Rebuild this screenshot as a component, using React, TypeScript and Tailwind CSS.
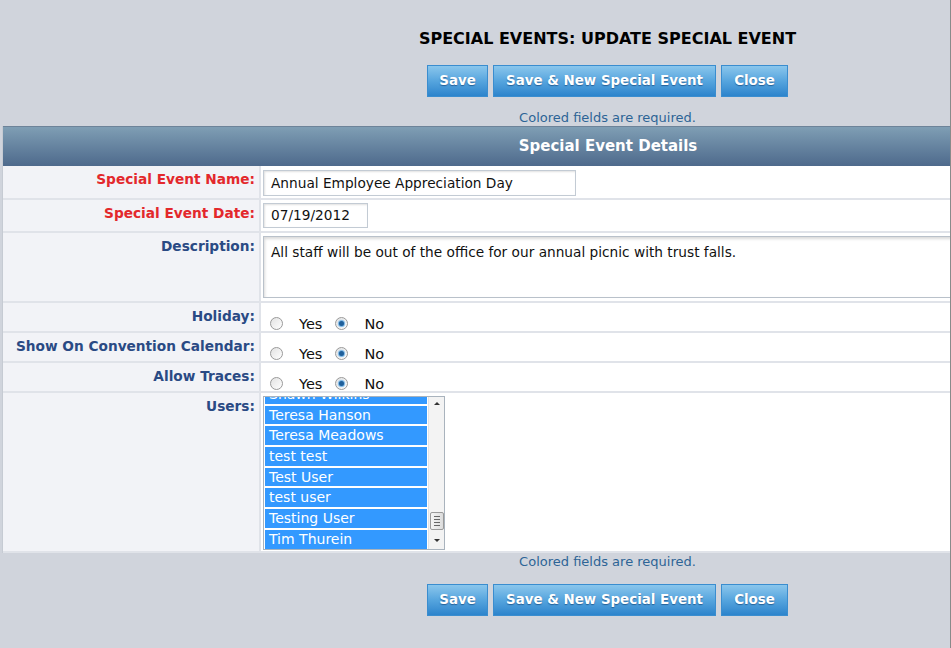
import React from 'react';

const font = { fontFamily: '"DejaVu Sans", Verdana, sans-serif' };

const users = [
  'Shawn Wilkins',
  'Teresa Hanson',
  'Teresa Meadows',
  'test test',
  'Test User',
  'test user',
  'Testing User',
  'Tim Thurein',
];

const ActionButtons: React.FC = () => (
  <div className="flex gap-[5px]">
    {['Save', 'Save & New Special Event', 'Close'].map((label) => (
      <button
        key={label}
        className={`h-[32px] border border-[#3a8dcf] bg-gradient-to-b from-[#8ac6ec] via-[#56a5de] to-[#2c84cc] text-[13.4px] font-bold text-white [text-shadow:0_1px_1px_rgba(0,40,90,0.5)] ${
          label === 'Save' ? 'w-[61px]' : label === 'Close' ? 'w-[67px]' : 'w-[223px]'
        }`}
      >
        {label}
      </button>
    ))}
  </div>
);

const Radio: React.FC<{ checked?: boolean }> = ({ checked }) => (
  <span className="flex h-[13px] w-[13px] items-center justify-center rounded-full border border-[#9a9a9a] bg-gradient-to-br from-[#e2e2e2] to-[#ffffff]">
    {checked && <span className="h-[5px] w-[5px] rounded-full bg-[#1f5f9a] shadow-[0_0_1px_1px_#6fb2e6]" />}
  </span>
);

const YesNo: React.FC = () => (
  <div className="flex items-center pl-[9px] pt-[8px] text-[14.5px] text-[#111]">
    <Radio />
    <span className="ml-[16px] mt-[3px]">Yes</span>
    <span className="ml-[13px]">
      <Radio checked />
    </span>
    <span className="ml-[16px] mt-[3px]">No</span>
  </div>
);

const Row: React.FC<{ label: string; required?: boolean; h: string; children: React.ReactNode }> = ({
  label,
  required,
  h,
  children,
}) => (
  <div className={`flex border-b-2 border-[#e0e3e9] ${h}`}>
    <div
      className={`w-[256px] shrink-0 bg-[#f2f3f7] pr-[4px] pt-[3px] text-right text-[13.7px] font-bold ${
        required ? 'text-[#e3282c]' : 'text-[#2a4a84]'
      }`}
    >
      {label}
    </div>
    <div className="flex-1 border-l-2 border-[#e0e3e9] bg-white">{children}</div>
  </div>
);

export default function App() {
  return (
    <div style={font} className="relative h-[648px] w-[951px] overflow-hidden border-r border-[#8a8a8a] bg-[#d0d4dc]">
      {/* top */}
      <div className="flex flex-col items-center pl-[265px]">
        <h1 className="mt-[27px] text-[16px] font-bold text-black">SPECIAL EVENTS: UPDATE SPECIAL EVENT</h1>
        <div className="mt-[14px]">
          <ActionButtons />
        </div>
        <p className="mt-[13px] h-[16px] text-[13px] leading-[16px] text-[#2d6496]">Colored fields are required.</p>
      </div>

      {/* details table */}
      <div className="ml-[2px] border-l border-[#c6cbd3]">
        <div className="flex h-[40px] items-center justify-center border-t border-[#6d8399] bg-gradient-to-b from-[#7f9eb4] to-[#4e6a8c] pl-[263px] text-[15px] font-bold text-white">
          Special Event Details
        </div>

        <Row label="Special Event Name:" required h="h-[34px]">
          <div className="pl-[2px] pt-[4px]">
            <div className="flex h-[26px] w-[313px] items-center border border-[#c3cbd4] pl-[7px] text-[13.7px] text-[#111] shadow-[inset_1px_1px_2px_rgba(0,0,0,0.12)]">
              Annual Employee Appreciation Day
            </div>
          </div>
        </Row>

        <Row label="Special Event Date:" required h="h-[33px]">
          <div className="pl-[2px] pt-[3px]">
            <div className="flex h-[25px] w-[105px] items-center border border-[#c3cbd4] pl-[7px] text-[13.7px] text-[#111] shadow-[inset_1px_1px_2px_rgba(0,0,0,0.12)]">
              07/19/2012
            </div>
          </div>
        </Row>

        <Row label="Description:" h="h-[70px]">
          <div className="pl-[2px] pt-[3px]">
            <div className="h-[62px] w-[800px] border border-[#b9c1ca] pl-[7px] pt-[5px] text-[13.7px] text-[#111] shadow-[inset_1px_2px_3px_rgba(0,0,0,0.15)]">
              All staff will be out of the office for our annual picnic with trust falls.
            </div>
          </div>
        </Row>

        <Row label="Holiday:" h="h-[30px]">
          <YesNo />
        </Row>
        <Row label="Show On Convention Calendar:" h="h-[30px]">
          <YesNo />
        </Row>
        <Row label="Allow Traces:" h="h-[30px]">
          <YesNo />
        </Row>

        <Row label="Users:" h="h-[160px]">
          <div className="pl-[2px] pt-[3px]">
            <div className="flex h-[154px] w-[182px] border border-[#a9b3bd] bg-white">
              <div className="relative w-[163px] overflow-hidden pl-[1px]">
                <div className="mt-[-12px]">
                  {users.map((u) => (
                    <div
                      key={u}
                      className="mb-[2px] flex h-[18.7px] items-center bg-[#3399ff] pl-[4px] text-[14px] text-white"
                    >
                      {u}
                    </div>
                  ))}
                </div>
              </div>
              <div className="relative ml-[1px] flex w-[16px] flex-col items-center border-l border-[#e3e3e3] bg-[#f3f3f3]">
                <span className="mt-[5px] h-0 w-0 border-x-[3px] border-b-[3px] border-x-transparent border-b-[#333]" />
                <div className="absolute top-[115px] flex h-[18px] w-[14px] flex-col items-center justify-center gap-[2px] rounded-[2px] border border-[#9a9a9a] bg-gradient-to-r from-[#f4f4f4] to-[#dcdcdc]">
                  <span className="h-px w-[6px] bg-[#666]" />
                  <span className="h-px w-[6px] bg-[#666]" />
                  <span className="h-px w-[6px] bg-[#666]" />
                  <span className="h-px w-[6px] bg-[#666]" />
                </div>
                <span className="absolute bottom-[7px] h-0 w-0 border-x-[3px] border-t-[3px] border-x-transparent border-t-[#333]" />
              </div>
            </div>
          </div>
        </Row>
      </div>

      {/* bottom */}
      <div className="flex flex-col items-center pl-[265px]">
        <p className="mt-[1px] h-[16px] text-[13px] leading-[16px] text-[#2d6496]">Colored fields are required.</p>
        <div className="mt-[14px]">
          <ActionButtons />
        </div>
      </div>
    </div>
  );
}
